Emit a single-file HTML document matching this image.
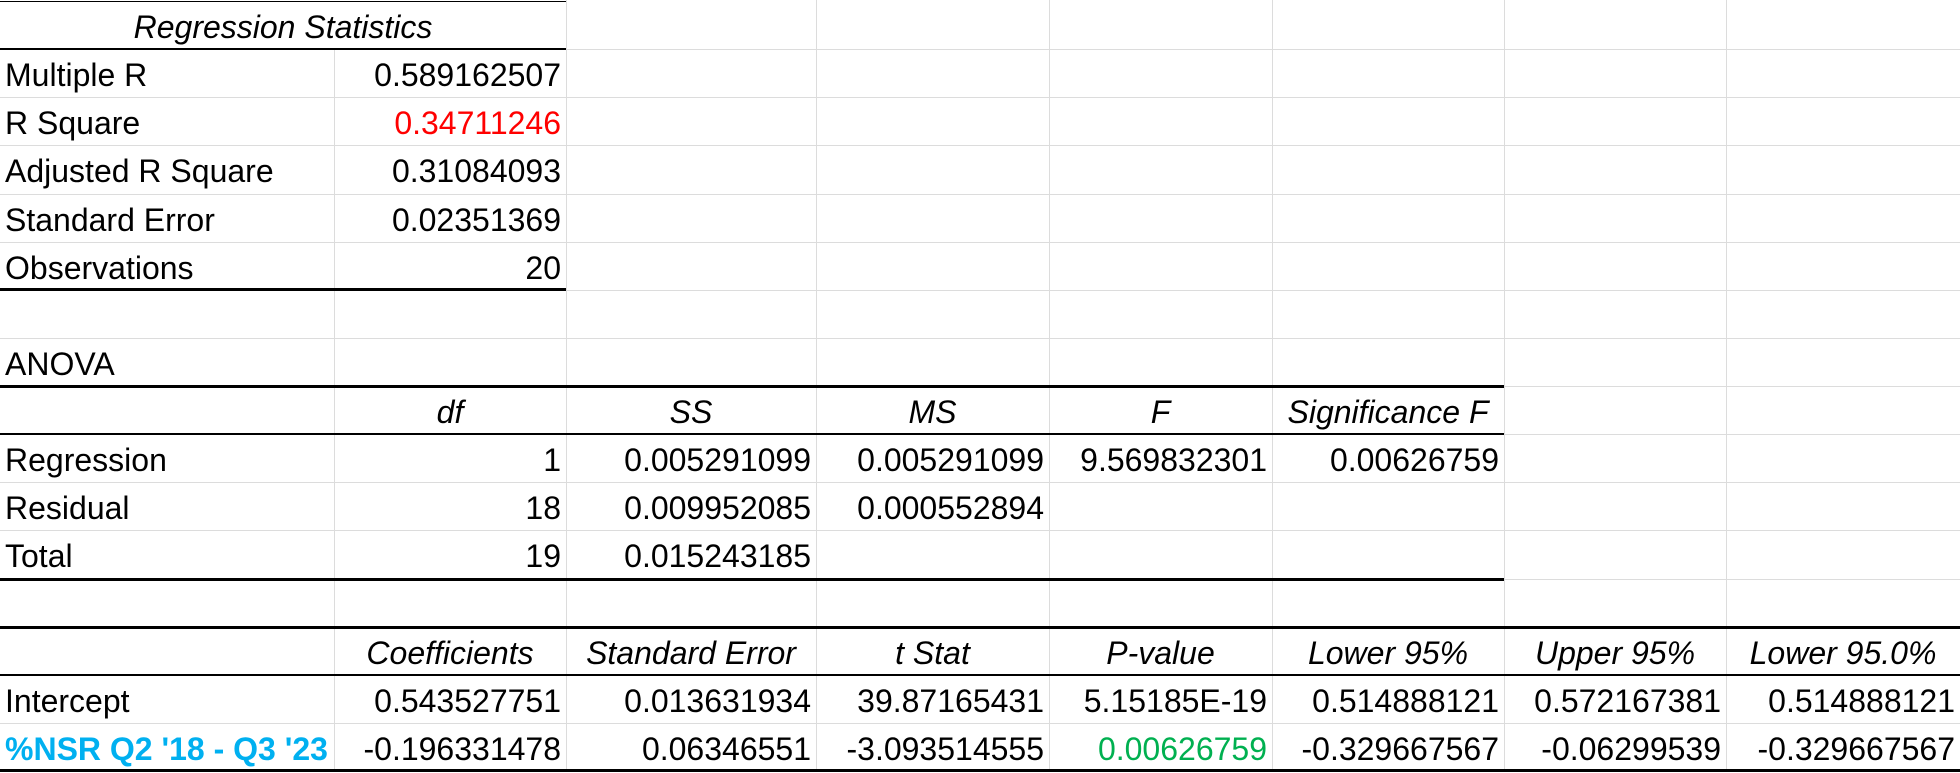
<!DOCTYPE html>
<html><head><meta charset="utf-8"><style>
html,body{margin:0;padding:0;background:#fff;}
body{width:1960px;height:772px;position:relative;overflow:hidden;font-family:"Liberation Sans",sans-serif;font-size:32px;color:#000;}
.v{position:absolute;top:0;width:1px;height:772px;background:#dcdcdc;}
.h{position:absolute;left:0;width:1960px;height:1px;background:#dcdcdc;}
.b{position:absolute;background:#000;}
.c{position:absolute;height:48px;line-height:48px;padding-top:2px;box-sizing:border-box;white-space:nowrap;}
.l{text-align:left;padding-left:5px;}
.r{text-align:right;padding-right:5px;}
.m{text-align:center;font-style:italic;}
</style></head><body>
<div class="v" style="left:334px"></div><div class="v" style="left:566px"></div><div class="v" style="left:816px"></div><div class="v" style="left:1049px"></div><div class="v" style="left:1272px"></div><div class="v" style="left:1504px"></div><div class="v" style="left:1726px"></div>
<div class="h" style="top:49px"></div><div class="h" style="top:97px"></div><div class="h" style="top:145px"></div><div class="h" style="top:194px"></div><div class="h" style="top:242px"></div><div class="h" style="top:290px"></div><div class="h" style="top:338px"></div><div class="h" style="top:386px"></div><div class="h" style="top:434px"></div><div class="h" style="top:482px"></div><div class="h" style="top:530px"></div><div class="h" style="top:579px"></div><div class="h" style="top:627px"></div><div class="h" style="top:675px"></div><div class="h" style="top:723px"></div>
<div style="position:absolute;left:333px;top:0;width:3px;height:49px;background:#fff"></div>
<div class="b" style="left:0;top:1px;width:566px;height:1px"></div>
<div class="b" style="left:0;top:48px;width:566px;height:2px"></div>
<div class="b" style="left:0;top:288px;width:566px;height:3px"></div>
<div class="b" style="left:0;top:385px;width:1504px;height:3px"></div>
<div class="b" style="left:0;top:433px;width:1504px;height:2px"></div>
<div class="b" style="left:0;top:578px;width:1504px;height:3px"></div>
<div class="b" style="left:0;top:626px;width:1960px;height:3px"></div>
<div class="b" style="left:0;top:674px;width:1960px;height:2px"></div>
<div class="b" style="left:0;top:769px;width:1960px;height:3px"></div>

<div class="c m" style="left:0;width:566px;top:1px">Regression Statistics</div>
<div class="c l" style="left:0;width:334px;top:49px">Multiple R</div><div class="c r" style="left:334px;width:232px;top:49px">0.589162507</div>
<div class="c l" style="left:0;width:334px;top:97px">R Square</div><div class="c r" style="left:334px;width:232px;top:97px;color:#ff0000">0.34711246</div>
<div class="c l" style="left:0;width:334px;top:145px">Adjusted R Square</div><div class="c r" style="left:334px;width:232px;top:145px">0.31084093</div>
<div class="c l" style="left:0;width:334px;top:194px">Standard Error</div><div class="c r" style="left:334px;width:232px;top:194px">0.02351369</div>
<div class="c l" style="left:0;width:334px;top:242px">Observations</div><div class="c r" style="left:334px;width:232px;top:242px">20</div>

<div class="c l" style="left:0;width:334px;top:338px">ANOVA</div>
<div class="c m" style="left:334px;width:232px;top:386px">df</div>
<div class="c m" style="left:566px;width:250px;top:386px">SS</div>
<div class="c m" style="left:816px;width:233px;top:386px">MS</div>
<div class="c m" style="left:1049px;width:223px;top:386px">F</div>
<div class="c m" style="left:1272px;width:232px;top:386px">Significance F</div>
<div class="c l" style="left:0;width:334px;top:434px">Regression</div>
<div class="c r" style="left:334px;width:232px;top:434px">1</div>
<div class="c r" style="left:566px;width:250px;top:434px">0.005291099</div>
<div class="c r" style="left:816px;width:233px;top:434px">0.005291099</div>
<div class="c r" style="left:1049px;width:223px;top:434px">9.569832301</div>
<div class="c r" style="left:1272px;width:232px;top:434px">0.00626759</div>
<div class="c l" style="left:0;width:334px;top:482px">Residual</div>
<div class="c r" style="left:334px;width:232px;top:482px">18</div>
<div class="c r" style="left:566px;width:250px;top:482px">0.009952085</div>
<div class="c r" style="left:816px;width:233px;top:482px">0.000552894</div>
<div class="c l" style="left:0;width:334px;top:530px">Total</div>
<div class="c r" style="left:334px;width:232px;top:530px">19</div>
<div class="c r" style="left:566px;width:250px;top:530px">0.015243185</div>

<div class="c m" style="left:334px;width:232px;top:627px">Coefficients</div>
<div class="c m" style="left:566px;width:250px;top:627px">Standard Error</div>
<div class="c m" style="left:816px;width:233px;top:627px">t Stat</div>
<div class="c m" style="left:1049px;width:223px;top:627px">P-value</div>
<div class="c m" style="left:1272px;width:232px;top:627px">Lower 95%</div>
<div class="c m" style="left:1504px;width:222px;top:627px">Upper 95%</div>
<div class="c m" style="left:1726px;width:234px;top:627px">Lower 95.0%</div>
<div class="c l" style="left:0;width:334px;top:675px">Intercept</div>
<div class="c r" style="left:334px;width:232px;top:675px">0.543527751</div>
<div class="c r" style="left:566px;width:250px;top:675px">0.013631934</div>
<div class="c r" style="left:816px;width:233px;top:675px">39.87165431</div>
<div class="c r" style="left:1049px;width:223px;top:675px">5.15185E-19</div>
<div class="c r" style="left:1272px;width:232px;top:675px">0.514888121</div>
<div class="c r" style="left:1504px;width:222px;top:675px">0.572167381</div>
<div class="c r" style="left:1726px;width:234px;top:675px">0.514888121</div>
<div class="c l" style="left:0;width:334px;top:723px;color:#00b0f0;font-weight:bold;font-size:32px">%NSR Q2 '18 - Q3 '23</div>
<div class="c r" style="left:334px;width:232px;top:723px">-0.196331478</div>
<div class="c r" style="left:566px;width:250px;top:723px">0.06346551</div>
<div class="c r" style="left:816px;width:233px;top:723px">-3.093514555</div>
<div class="c r" style="left:1049px;width:223px;top:723px;color:#00b050">0.00626759</div>
<div class="c r" style="left:1272px;width:232px;top:723px">-0.329667567</div>
<div class="c r" style="left:1504px;width:222px;top:723px">-0.06299539</div>
<div class="c r" style="left:1726px;width:234px;top:723px">-0.329667567</div>
</body></html>
